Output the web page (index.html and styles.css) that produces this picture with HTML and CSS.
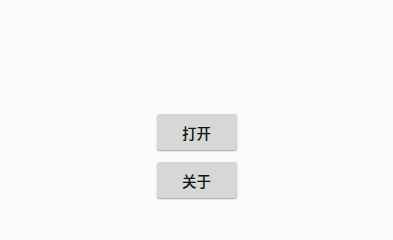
FILE: index.html
```html
<!DOCTYPE html>
<html>
<head>
<meta charset="utf-8">
<link rel="stylesheet" href="styles.css">
</head>
<body>
<div class="screen">
  <button class="btn">打开</button>
  <button class="btn">关于</button>
</div>
</body>
</html>
```
FILE: styles.css
```css
html, body {
  margin: 0;
  padding: 0;
  background: #fafafa;
  overflow: hidden;
}
.screen {
  width: 393px;
  height: 221px;
  display: flex;
  flex-direction: column;
  align-items: center;
  padding-top: 114px;
  box-sizing: border-box;
  gap: 12px;
}
.btn {
  width: 80px;
  height: 36px;
  border: none;
  border-radius: 2px;
  background: #d6d7d7;
  color: #111111;
  font-family: "Noto Sans CJK SC", sans-serif;
  font-size: 14.5px;
  font-weight: 500;
  padding: 0;
  box-shadow: 0 1px 2px rgba(0,0,0,0.22), 0 1px 1px rgba(0,0,0,0.12);
}
```
